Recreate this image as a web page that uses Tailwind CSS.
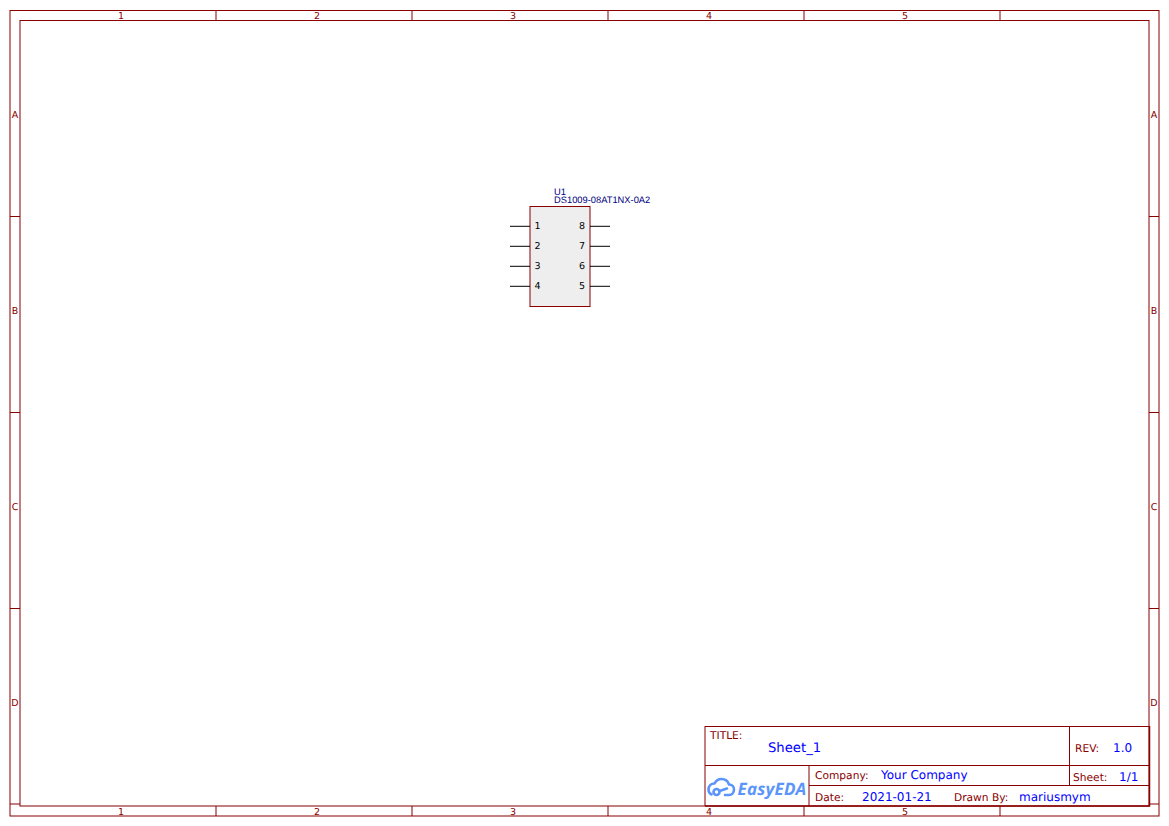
<!DOCTYPE html>
<html lang="en">
<head>
    <meta charset="UTF-8">
    <title>Sheet_1</title>
    <script src="https://cdn.jsdelivr.net/npm/@tailwindcss/browser@4"></script>
</head>
<body class="bg-white overflow-hidden">
    <svg class="block font-['DejaVu_Sans',sans-serif] [text-rendering:geometricPrecision]" width="1169" height="826" viewBox="0 0 1169 826" fill="none">
        <!-- Sheet frame -->
        <g class="stroke-[#880000]" stroke-width="1">
            <rect x="10" y="10.5" width="1149" height="805.5"/>
            <rect x="20" y="20.5" width="1129" height="785.5"/>
            <path d="M216 10.5V20.5M412 10.5V20.5M608 10.5V20.5M804 10.5V20.5M1000 10.5V20.5"/>
            <path d="M216 806V816M412 806V816M608 806V816M804 806V816M1000 806V816"/>
            <path d="M10 216.5H20M10 412.5H20M10 608.5H20M10 804H20"/>
            <path d="M1149 216.5H1159M1149 412.5H1159M1149 608.5H1159M1149 804H1159"/>
        </g>

        <!-- Zone labels -->
        <g class="fill-[#880000] text-[9.5px]" text-anchor="middle">
            <text x="121" y="19">1</text><text x="317" y="19">2</text><text x="513" y="19">3</text><text x="709" y="19">4</text><text x="905" y="19">5</text>
            <text x="121" y="815">1</text><text x="317" y="815">2</text><text x="513" y="815">3</text><text x="709" y="815">4</text><text x="905" y="815">5</text>
            <text x="15" y="118">A</text><text x="15" y="314">B</text><text x="15" y="510">C</text><text x="15" y="706">D</text>
            <text x="1154" y="118">A</text><text x="1154" y="314">B</text><text x="1154" y="510">C</text><text x="1154" y="706">D</text>
        </g>

        <!-- U1 -->
        <rect x="530" y="206.5" width="60" height="100" class="fill-[#eeeeee] stroke-[#880000]"/>
        <path class="stroke-black" d="M510 226.3H530M510 246.3H530M510 266.3H530M510 286.3H530M590 226.3H610M590 246.3H610M590 266.3H610M590 286.3H610"/>
        <g class="fill-black text-[9.5px]">
            <text x="534.5" y="229.3">1</text><text x="534.5" y="249.3">2</text><text x="534.5" y="269.3">3</text><text x="534.5" y="289.3">4</text>
            <text x="579" y="229.3">8</text><text x="579" y="249.3">7</text><text x="579" y="269.3">6</text><text x="579" y="289.3">5</text>
        </g>
        <g class="fill-[#000080] text-[9.33px] font-['Liberation_Sans',sans-serif]">
            <text x="554" y="195">U1</text>
            <text x="554" y="203">DS1009-08AT1NX-0A2</text>
        </g>

        <!-- Title block -->
        <g class="stroke-[#880000]">
            <path stroke-width="1" d="M705 726.5H1149M705 726V806M705 765.5H1149M809 785.5H1149M809 765V806M1069.5 726V785"/>
            <path stroke-width="1.5" d="M705 806H1149.5V726"/>
        </g>
        <g class="fill-[#880000] text-[10.67px]">
            <text x="710" y="739">TITLE:</text>
            <text x="1075" y="752">REV:</text>
            <text x="815" y="779">Company:</text>
            <text x="1073" y="781">Sheet:</text>
            <text x="815" y="801">Date:</text>
            <text x="954" y="801">Drawn By:</text>
        </g>
        <g class="fill-[#0000ff]">
            <text x="768" y="751.5" class="text-[13.2px]">Sheet_1</text>
            <text x="1113" y="752" class="text-[12px]">1.0</text>
            <text x="881" y="779" class="text-[12px]">Your Company</text>
            <text x="1119" y="781" class="text-[12px]">1/1</text>
            <text x="862" y="801" class="text-[12px]">2021-01-21</text>
            <text x="1019" y="801" class="text-[12px]">mariusmym</text>
        </g>

        <!-- EasyEDA logo -->
        <g class="stroke-[#5b95fb]" stroke-width="2.6" stroke-linecap="round" stroke-linejoin="round">
            <path d="M711.5 794.5C709.5 793.5 708.5 791.5 708.5 789.5C708.5 786 711 783.5 714.5 783.5C716 780.5 718.5 779 721.5 779C725.5 779 728 781.5 729 784.5C732 784.5 734 786.5 734 789.5C734 792.5 732 795 729 795H725"/>
            <circle cx="716.5" cy="792" r="3"/>
            <path d="M719.5 791L727 788.5"/>
        </g>
        <text x="737.5" y="795" class="fill-[#5b95fb] text-[17px] font-bold italic tracking-[0.2px] font-['Open_Sans',sans-serif]">EasyEDA</text>
    </svg>
</body>
</html>
